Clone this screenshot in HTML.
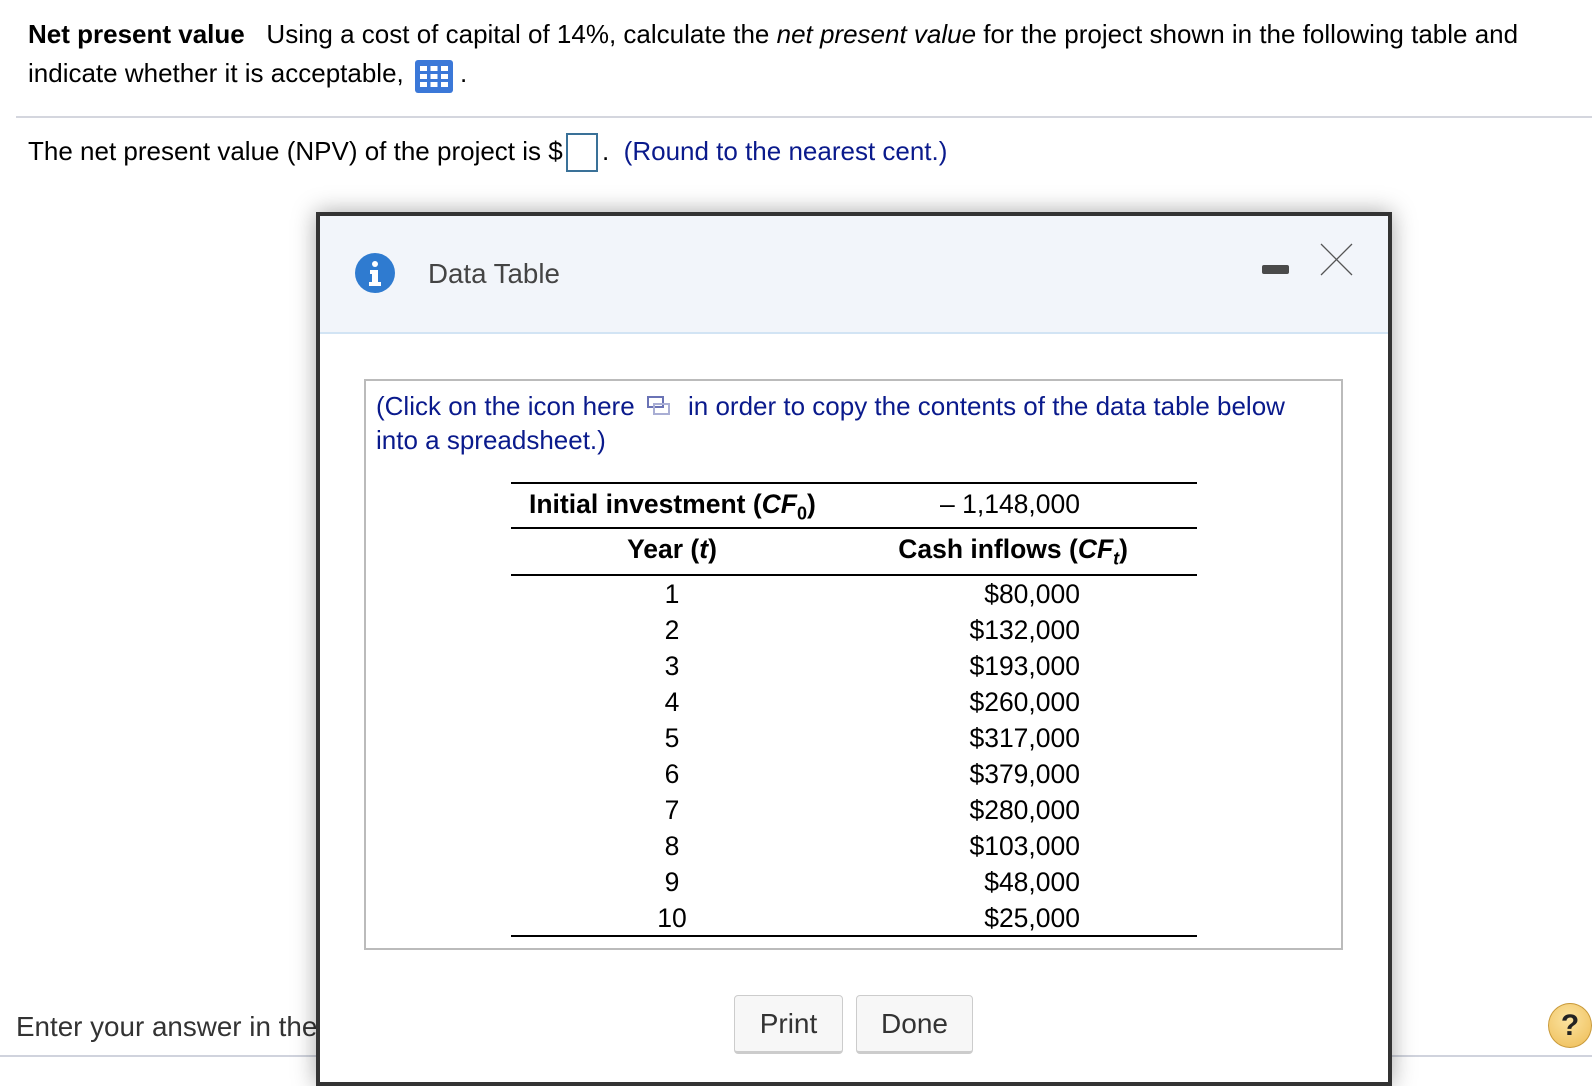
<!DOCTYPE html>
<html><head><meta charset="utf-8"><style>
*{margin:0;padding:0;box-sizing:border-box}
body{width:1592px;height:1086px;position:relative;overflow:hidden;background:#fff;font-family:"Liberation Sans",Arial,sans-serif;color:#000;font-size:26px}
.a{position:absolute;white-space:nowrap}
.blue{color:#0a1a8c}
.row{position:absolute;left:511px;width:686px;height:36px;line-height:36px;font-size:26.5px}
.row .y{position:absolute;left:0;width:322px;text-align:center}
.row .c{position:absolute;right:117px;text-align:right}
.hl{position:absolute;left:511px;width:686px;height:2px;background:#000}
.btn{position:absolute;top:995px;height:59px;border:1px solid #ccc;border-bottom:3px solid #ccc;border-radius:4px;background:#f7f7f7;color:#333;font-size:28px;text-align:center;line-height:56px}
</style></head><body>
<div class="a" style="left:28px;top:18px;line-height:32px"><b>Net present value</b>&nbsp;&nbsp; Using a cost of capital of 14%, calculate the <i>net present value</i> for the project shown in the following table and</div>
<div class="a" style="left:28px;top:57px;line-height:32px">indicate whether it is acceptable,</div>
<svg class="a" style="left:415px;top:60px" width="38" height="33" viewBox="0 0 38 33"><rect x="0" y="0" width="38" height="33" rx="3" fill="#3b78d8"/><g fill="#fff"><rect x="5" y="6" width="7" height="5"/><rect x="15.5" y="6" width="7" height="5"/><rect x="26" y="6" width="7" height="5"/><rect x="5" y="14" width="7" height="5"/><rect x="15.5" y="14" width="7" height="5"/><rect x="26" y="14" width="7" height="5"/><rect x="5" y="22" width="7" height="5"/><rect x="15.5" y="22" width="7" height="5"/><rect x="26" y="22" width="7" height="5"/></g></svg>
<div class="a" style="left:460px;top:57px;line-height:32px">.</div>
<div class="a" style="left:16px;top:116px;width:1576px;height:2px;background:#d4d6de"></div>
<div class="a" style="left:28px;top:135px;line-height:32px">The net present value (NPV) of the project is $</div>
<div class="a" style="left:566px;top:133px;width:32px;height:39px;border:2px solid #3a7198"></div>
<div class="a" style="left:602px;top:135px;line-height:32px">.&nbsp;&nbsp;<span class="blue">(Round to the nearest cent.)</span></div>
<div class="a" style="left:16px;top:1011px;line-height:32px;color:#333;font-size:27.8px">Enter your answer in the</div>
<div class="a" style="left:0;top:1055px;width:1592px;height:2px;background:#d0d3dd"></div>
<div class="a" style="left:1548px;top:1003px;width:44px;height:45px;border-radius:50%;background:radial-gradient(circle at 45% 35%,#fbe3a0,#eebc55);border:1px solid #c99a3a;text-align:center;line-height:44px;font-weight:bold;font-size:30px;color:#222">?</div>
<div class="a" style="left:316px;top:212px;width:1076px;height:874px;border:4px solid #333;background:#fff;box-shadow:0 0 22px rgba(0,0,0,.35)">
 <div style="position:absolute;left:0;top:0;width:100%;height:118px;background:#f2f5fa;border-bottom:2px solid #d2e4f4"></div>
</div>
<svg class="a" style="left:355px;top:253px" width="40" height="40"><circle cx="20" cy="20" r="20" fill="#2f7bd0"/><circle cx="20" cy="11" r="3" fill="#fff"/><path d="M15 17h8v12h3v4H14v-4h3v-8h-2z" fill="#fff"/></svg>
<div class="a" style="left:428px;top:258px;line-height:32px;font-size:27.7px;color:#444">Data Table</div>
<div class="a" style="left:1262px;top:265px;width:27px;height:9px;border-radius:2px;background:#4a4a4a"></div>
<svg class="a" style="left:1320px;top:243px" width="33" height="33"><path d="M1 1L32 32M32 1L1 32" stroke="#555" stroke-width="1.3"/></svg>
<div class="a" style="left:364px;top:379px;width:979px;height:571px;border:2px solid #bbb"></div>
<div class="a blue" style="left:376px;top:390px;line-height:32px">(Click on the icon here</div>
<svg class="a" style="left:647px;top:396px" width="24" height="20"><rect x="1" y="1" width="15" height="10" fill="#fff" stroke="#6a73b5" stroke-width="2"/><rect x="7" y="8" width="15" height="10" fill="none" stroke="#a9aed4" stroke-width="2"/></svg>
<div class="a blue" style="left:688px;top:390px;line-height:32px">in order to copy the contents of the data table below</div>
<div class="a blue" style="left:376px;top:424px;line-height:32px">into a spreadsheet.)</div>
<div class="hl" style="top:482px"></div>
<div class="a" style="left:529px;top:486px;line-height:36px;font-weight:bold;font-size:26.5px">Initial investment (<i>CF</i><sub style="font-size:18px">0</sub>)</div>
<div class="a" style="right:512px;top:486px;line-height:36px;font-size:26.5px">&#8211; 1,148,000</div>
<div class="hl" style="top:527px"></div>
<div class="row" style="top:531px;font-weight:bold"><span class="y">Year (<i>t</i>)</span><span class="c" style="right:69px">Cash inflows (<i>CF</i><sub style="font-size:18px"><i>t</i></sub>)</span></div>
<div class="hl" style="top:574px"></div>
<div class="row" style="top:576px"><span class="y">1</span><span class="c">$80,000</span></div>
<div class="row" style="top:612px"><span class="y">2</span><span class="c">$132,000</span></div>
<div class="row" style="top:648px"><span class="y">3</span><span class="c">$193,000</span></div>
<div class="row" style="top:684px"><span class="y">4</span><span class="c">$260,000</span></div>
<div class="row" style="top:720px"><span class="y">5</span><span class="c">$317,000</span></div>
<div class="row" style="top:756px"><span class="y">6</span><span class="c">$379,000</span></div>
<div class="row" style="top:792px"><span class="y">7</span><span class="c">$280,000</span></div>
<div class="row" style="top:828px"><span class="y">8</span><span class="c">$103,000</span></div>
<div class="row" style="top:864px"><span class="y">9</span><span class="c">$48,000</span></div>
<div class="row" style="top:900px"><span class="y">10</span><span class="c">$25,000</span></div>
<div class="hl" style="top:935px"></div>
<div class="btn" style="left:734px;width:109px">Print</div>
<div class="btn" style="left:856px;width:117px">Done</div>
</body></html>
